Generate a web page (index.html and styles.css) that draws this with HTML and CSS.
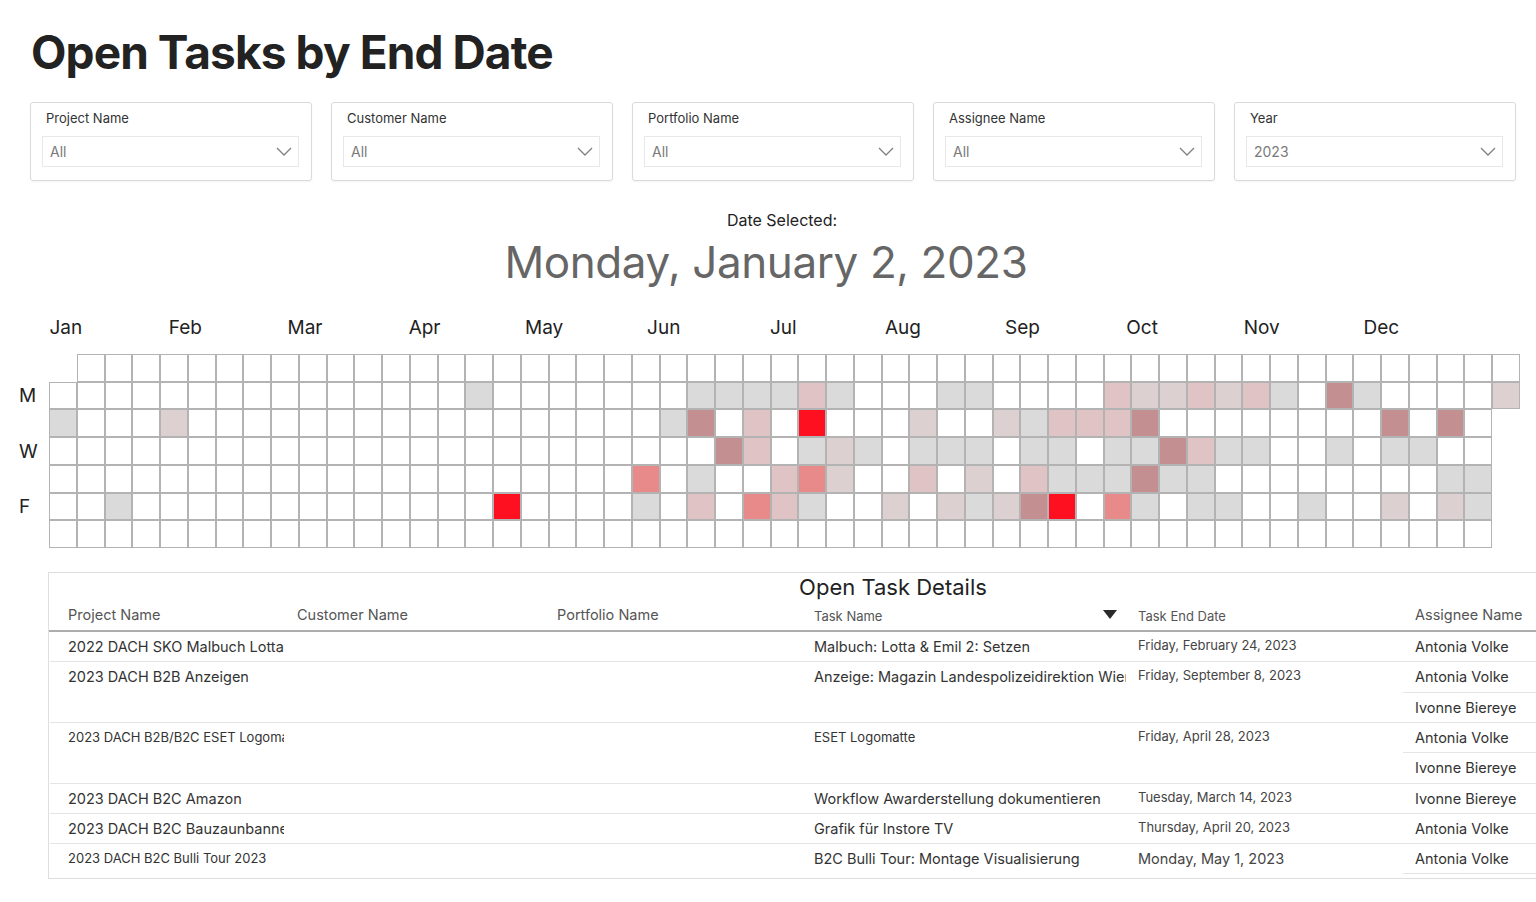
FILE: index.html
```html
<!DOCTYPE html>
<html lang="de">
<head>
<meta charset="utf-8">
<title>Open Tasks by End Date</title>
<link rel="stylesheet" href="styles.css">
</head>
<body>
<main class="dashboard">
  <h1 class="title">Open Tasks by End Date</h1>

  <section class="filters">
    <div class="filter">
      <div class="filter-label">Project Name</div>
      <div class="select"><span>All</span><svg class="chevron" viewBox="0 0 16 9"><path d="M1 1l7 7 7-7"/></svg></div>
    </div>
    <div class="filter">
      <div class="filter-label">Customer Name</div>
      <div class="select"><span>All</span><svg class="chevron" viewBox="0 0 16 9"><path d="M1 1l7 7 7-7"/></svg></div>
    </div>
    <div class="filter">
      <div class="filter-label">Portfolio Name</div>
      <div class="select"><span>All</span><svg class="chevron" viewBox="0 0 16 9"><path d="M1 1l7 7 7-7"/></svg></div>
    </div>
    <div class="filter">
      <div class="filter-label">Assignee Name</div>
      <div class="select"><span>All</span><svg class="chevron" viewBox="0 0 16 9"><path d="M1 1l7 7 7-7"/></svg></div>
    </div>
    <div class="filter">
      <div class="filter-label">Year</div>
      <div class="select"><span>2023</span><svg class="chevron" viewBox="0 0 16 9"><path d="M1 1l7 7 7-7"/></svg></div>
    </div>
  </section>

  <section class="selected">
    <div class="selected-label">Date Selected:</div>
    <div class="selected-date">Monday, January 2, 2023</div>
  </section>

  <section class="calendar">
    <div class="months">
      <span>Jan</span><span>Feb</span><span>Mar</span><span>Apr</span><span>May</span><span>Jun</span>
      <span>Jul</span><span>Aug</span><span>Sep</span><span>Oct</span><span>Nov</span><span>Dec</span>
    </div>
    <div class="calendar-body">
      <div class="days">
        <span></span><span>M</span><span></span><span>W</span><span></span><span>F</span><span></span>
      </div>
      <div class="heatmap" id="heatmap"></div>
    </div>
  </section>

  <section class="details">
    <h2 class="details-title">Open Task Details</h2>
    <div class="table">
      <div class="trow thead">
        <div class="cell-project">Project Name</div>
        <div class="cell-customer">Customer Name</div>
        <div class="cell-portfolio">Portfolio Name</div>
        <div class="cell-task sm">Task Name<svg class="sort" viewBox="0 0 14 9"><path d="M0 0h14L7 9z"/></svg></div>
        <div class="cell-date sm">Task End Date</div>
        <div class="cell-assignee">Assignee Name</div>
      </div>

      <div class="trow">
        <div class="cell-project">2022 DACH SKO Malbuch Lotta</div>
        <div class="cell-customer"></div>
        <div class="cell-portfolio"></div>
        <div class="cell-task">Malbuch: Lotta &amp; Emil 2: Setzen</div>
        <div class="cell-date sm">Friday, February 24, 2023</div>
        <div class="cell-assignee"><div class="sub">Antonia Volke</div></div>
      </div>

      <div class="trow">
        <div class="cell-project">2023 DACH B2B Anzeigen</div>
        <div class="cell-customer"></div>
        <div class="cell-portfolio"></div>
        <div class="cell-task">Anzeige: Magazin Landespolizeidirektion Wien</div>
        <div class="cell-date sm">Friday, September 8, 2023</div>
        <div class="cell-assignee"><div class="sub">Antonia Volke</div><div class="sub">Ivonne Biereye</div></div>
      </div>

      <div class="trow">
        <div class="cell-project sm">2023 DACH B2B/B2C ESET Logomatte</div>
        <div class="cell-customer"></div>
        <div class="cell-portfolio"></div>
        <div class="cell-task sm">ESET Logomatte</div>
        <div class="cell-date sm">Friday, April 28, 2023</div>
        <div class="cell-assignee"><div class="sub">Antonia Volke</div><div class="sub">Ivonne Biereye</div></div>
      </div>

      <div class="trow">
        <div class="cell-project">2023 DACH B2C Amazon</div>
        <div class="cell-customer"></div>
        <div class="cell-portfolio"></div>
        <div class="cell-task">Workflow Awarderstellung dokumentieren</div>
        <div class="cell-date sm">Tuesday, March 14, 2023</div>
        <div class="cell-assignee"><div class="sub">Ivonne Biereye</div></div>
      </div>

      <div class="trow">
        <div class="cell-project">2023 DACH B2C Bauzaunbanner</div>
        <div class="cell-customer"></div>
        <div class="cell-portfolio"></div>
        <div class="cell-task">Grafik für Instore TV</div>
        <div class="cell-date sm">Thursday, April 20, 2023</div>
        <div class="cell-assignee"><div class="sub">Antonia Volke</div></div>
      </div>

      <div class="trow trow-last">
        <div class="cell-project sm">2023 DACH B2C Bulli Tour 2023</div>
        <div class="cell-customer"></div>
        <div class="cell-portfolio"></div>
        <div class="cell-task">B2C Bulli Tour: Montage Visualisierung</div>
        <div class="cell-date">Monday, May 1, 2023</div>
        <div class="cell-assignee"><div class="sub">Antonia Volke</div></div>
      </div>
    </div>
  </section>
</main>
<script src="script.js"></script>
</body>
</html>
```

FILE: styles.css
```css
body {
  margin: 0;
  background: #fff;
  color: #222;
  font-family: Inter, "Noto Sans", "Liberation Sans", sans-serif;
  overflow: hidden;
}

.dashboard {
  width: 1536px;
}

/* ---------- heading ---------- */
.title {
  margin: 0;
  padding: 29px 0 0 31px;
  font-size: 46px;
  line-height: 46px;
  font-weight: 700;
  letter-spacing: -0.9px;
  color: #222;
}

/* ---------- filter cards ---------- */
.filters {
  display: flex;
  gap: 19px;
  margin-top: 27px;
  padding-left: 30px;
}

.filter {
  width: 282px;
  height: 79px;
  box-sizing: border-box;
  border: 1px solid #dadada;
  border-radius: 3px;
  padding: 7px 12px 0 11px;
  box-shadow: 0 1px 2px rgba(0, 0, 0, 0.05);
}

.filter-label {
  padding-left: 4px;
  font-size: 13px;
  line-height: 16px;
  color: #333;
}

.select {
  margin-top: 10px;
  height: 31px;
  box-sizing: border-box;
  border: 1px solid #e8e8e8;
  display: flex;
  align-items: center;
  justify-content: space-between;
  padding: 0 6px 1px 7px;
  font-size: 14px;
  color: #7a7a7a;
}

.chevron {
  width: 16px;
  height: 9px;
  fill: none;
  stroke: #808080;
  stroke-width: 1.3;
}

/* ---------- selected date ---------- */
.selected {
  margin-top: 29px;
  text-align: center;
}

.selected-label {
  padding-left: 28px;
  font-size: 16px;
  line-height: 20px;
  color: #222;
}

.selected-date {
  margin-top: 6px;
  padding-right: 4px;
  font-size: 44px;
  line-height: 52px;
  letter-spacing: -0.4px;
  color: #666;
}

/* ---------- calendar heatmap ---------- */
.months {
  display: grid;
  grid-template-columns: repeat(12, 119.6px);
  margin: 28px 0 0 6px;
  font-size: 19px;
  line-height: 24px;
  text-align: center;
  color: #222;
}

.calendar-body {
  display: flex;
  margin-top: 14px;
}

.days {
  width: 49px;
  box-sizing: border-box;
  padding-left: 19px;
  display: grid;
  grid-template-rows: repeat(7, 27.73px);
  align-items: center;
  font-size: 19px;
  color: #222;
}

.heatmap {
  width: 1471px;
  display: grid;
  grid-template-columns: repeat(53, 1fr);
  grid-auto-rows: 27.73px;
}

.day {
  border: 1px solid #b3b3b3;
  background: #fff;
}

.day-none { border-color: transparent; background: transparent; }
.day-g { background: #dadada; }
.day-p { background: #e0c3c4; }
.day-q { background: #dcd0d0; }
.day-m { background: #c48f90; }
.day-s { background: #e88a8a; }
.day-r { background: #ff1020; }

/* ---------- task table ---------- */
.details {
  margin: 24px 0 0 48px;
  width: 1688px;
  border: 1px solid #dedede;
  border-right: none;
  padding-bottom: 4px;
}

.details-title {
  margin: 0;
  font-size: 22px;
  line-height: 28px;
  font-weight: 400;
  text-align: center;
  color: #222;
}

.trow {
  display: grid;
  grid-template-columns: 234px 260px 257px 325px 277px 1fr;
  margin-left: 1px;
  border-bottom: 1px solid #e4e4e4;
  font-size: 14.5px;
  line-height: 29.3px;
  color: #333;
}

.trow > div {
  white-space: nowrap;
  overflow: hidden;
}

.trow-last { border-bottom: none; }

.cell-project { padding-left: 18px; }
.cell-customer,
.cell-portfolio,
.cell-task { padding-left: 13px; }
.cell-date { padding-left: 12px; color: #444; }
.cell-date.sm { line-height: 26px; }

.cell-assignee { padding-left: 0; }
.sub {
  padding-left: 12px;
  border-bottom: 1px solid #e4e4e4;
}
.sub:last-child { border-bottom: none; }
.trow-last .sub:last-child { border-bottom: 1px solid #e4e4e4; }

.sm { font-size: 13px; }

.thead {
  margin-left: 0;
  grid-template-columns: 235px 260px 257px 325px 277px 1fr;
  height: 29px;
  border-bottom: 2px solid #adadad;
  align-items: end;
  color: #555;
  line-height: 18px;
}

.thead > div {
  padding-bottom: 6px;
}

.thead .cell-project { padding-left: 19px; }
.thead .sm { line-height: 16px; padding-bottom: 6px; }
.thead .cell-date { color: #555; }
.thead .cell-assignee { padding-left: 12px; }

.thead .cell-task {
  display: flex;
  justify-content: space-between;
  align-items: flex-end;
}

.sort {
  width: 14px;
  height: 9px;
  margin: 0 9px 5px 0;
  fill: #2a2a2a;
}
```

FILE: script.js
```js
// Weekly calendar heatmap: 7 weekday rows (Sun..Sat) x 53 week columns.
// Shade keys: g = no due tasks, q/p = few, m/s = more, r = most.
const shades = [
  {},
  {15:'g',23:'g',24:'g',25:'g',26:'g',27:'p',28:'g',32:'g',33:'g',38:'p',39:'q',40:'q',41:'p',42:'q',43:'p',44:'g',46:'m',47:'g',52:'q'},
  {0:'g',4:'q',22:'g',23:'m',25:'p',27:'r',31:'q',34:'q',35:'g',36:'p',37:'p',38:'p',39:'m',48:'m',50:'m'},
  {24:'m',25:'p',27:'g',28:'q',29:'g',31:'g',32:'g',33:'g',35:'g',36:'g',38:'g',39:'g',40:'m',41:'p',42:'g',43:'g',46:'g',48:'g',49:'g'},
  {21:'s',23:'g',26:'p',27:'s',28:'q',31:'p',33:'q',35:'p',36:'g',37:'g',38:'g',39:'m',40:'g',41:'g',50:'g',51:'g'},
  {2:'g',16:'r',21:'g',23:'p',25:'s',26:'p',27:'g',30:'q',32:'q',33:'g',34:'q',35:'m',36:'r',38:'s',39:'g',41:'g',42:'g',45:'g',48:'q',50:'q',51:'g'},
  {}
];

const heatmap = document.getElementById('heatmap');
for (let row = 0; row < 7; row++) {
  for (let col = 0; col < 53; col++) {
    const cell = document.createElement('div');
    const outside = (row === 0 && col === 0) || (row >= 2 && col === 52);
    cell.className = 'day';
    if (outside) {
      cell.classList.add('day-none');
    } else if (shades[row][col]) {
      cell.classList.add('day-' + shades[row][col]);
    }
    heatmap.appendChild(cell);
  }
}
```
